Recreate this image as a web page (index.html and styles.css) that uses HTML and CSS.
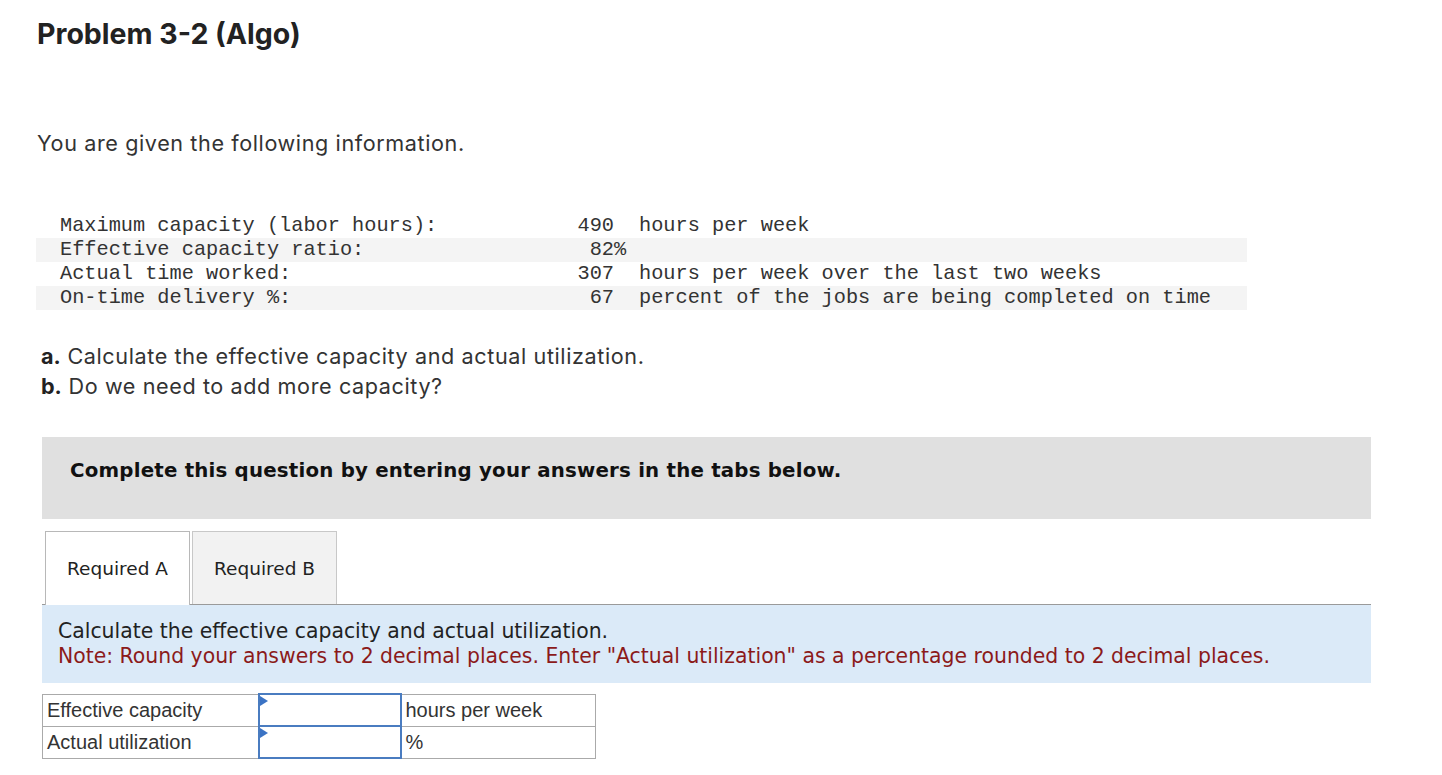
FILE: index.html
```html
<!DOCTYPE html>
<html>
<head>
<meta charset="utf-8">
<link rel="stylesheet" href="styles.css">
</head>
<body>
<div class="page">
  <h1 class="title">Problem 3-2 (Algo)</h1>
  <p class="intro">You are given the following information.</p>
  <table class="info">
    <tr><td class="lbl">Maximum capacity (labor hours):</td><td class="num">490</td><td class="txt">hours per week</td></tr>
    <tr class="alt"><td class="lbl">Effective capacity ratio:</td><td class="num">82<span class="pct">%</span></td><td class="txt"></td></tr>
    <tr><td class="lbl">Actual time worked:</td><td class="num">307</td><td class="txt">hours per week over the last two weeks</td></tr>
    <tr class="alt"><td class="lbl">On-time delivery %:</td><td class="num">67</td><td class="txt">percent of the jobs are being completed on time</td></tr>
  </table>
  <div class="questions">
    <div><b>a.</b> Calculate the effective capacity and actual utilization.</div>
    <div><b>b.</b> Do we need to add more capacity?</div>
  </div>
  <div class="panel">
    <div class="banner">Complete this question by entering your answers in the tabs below.</div>
    <div class="tabs">
      <div class="tab active">Required A</div>
      <div class="tab">Required B</div>
    </div>
    <div class="instr">
      <div>Calculate the effective capacity and actual utilization.</div>
      <div class="note">Note: Round your answers to 2 decimal places. Enter "Actual utilization" as a percentage rounded to 2 decimal places.</div>
    </div>
    <table class="answers">
      <tr><td class="alabel">Effective capacity</td><td class="ainput"><span class="flag"></span></td><td class="aunit">hours per week</td></tr>
      <tr><td class="alabel">Actual utilization</td><td class="ainput"><span class="flag"></span></td><td class="aunit">%</td></tr>
    </table>
  </div>
</div>
</body>
</html>
```
FILE: styles.css
```css
html, body { margin: 0; padding: 0; background: #fff; }
.page { padding: 0 0 0 37px; color: #333; font-family: Inter, "Open Sans", sans-serif; }
.title { margin: 0; padding-top: 18px; font-size: 28.5px; font-weight: 700; color: #222; line-height: 32px; height: 32px; }
.intro { margin: 0; padding-top: 80px; font-size: 21.6px; line-height: 26px; color: #333; letter-spacing: 0.6px; }
.info { margin-top: 58px; margin-left: -1px; border-collapse: collapse; width: 1211px; font-family: "Liberation Mono", monospace; font-size: 20.3px; color: #333; }
.info td { padding: 0; height: 24px; line-height: 24px; white-space: pre; }
.info tr.alt td { background: #f4f4f4; }
.info .lbl { padding-left: 24px; width: 480px; }
.info .num { text-align: right; width: 74px; padding-right: 0; }
.info .pct { display: inline-block; width: 0; overflow: visible; }
.info .txt { padding-left: 25px; }
.questions { margin-top: 31px; margin-left: 4px; font-size: 21.6px; line-height: 30px; color: #333; letter-spacing: 0.6px; }
.questions b { font-weight: 700; color: #222; letter-spacing: 0; }
.panel { margin-top: 36px; margin-left: 5px; width: 1329px; font-family: "DejaVu Sans", Verdana, sans-serif; }
.banner { background: #e0e0e0; height: 82px; padding: 0 0 16px 28px; font-weight: 700; font-size: 19.8px; color: #111; box-sizing: border-box; display: flex; align-items: center; letter-spacing: 0.2px; }
.tabs { display: flex; gap: 2px; margin-top: 12px; padding-left: 3px; border-bottom: 1px solid #9a9a9a; height: 73px; }
.tab { width: 145px; border: 1px solid #c8c8c8; border-bottom: none; background: #f2f2f2; font-size: 18.5px; color: #222; display: flex; align-items: center; justify-content: center; box-sizing: border-box; height: 73px; }
.tab.active { background: #fff; height: 74px; margin-bottom: -1px; border-color: #b8b8b8; }
.instr { background: #dbeaf8; height: 78px; padding: 14px 0 0 16px; box-sizing: border-box; font-size: 20.4px; line-height: 25px; color: #222; }
.instr .note { color: #8b1a1a; }
.answers { margin-top: 10px; border-collapse: collapse; font-family: "Liberation Sans", Arial, sans-serif; font-size: 20px; color: #333; }
.answers td { border: 1px solid #aaa; height: 32px; padding: 0 4px; box-sizing: border-box; }
.answers .alabel { width: 216px; }
.answers .ainput { width: 142px; border: 2px solid #4a7cc0; position: relative; padding: 0; }
.answers .aunit { width: 195px; }
.flag { position: absolute; left: 0; top: 1px; width: 0; height: 0; border-top: 5px solid transparent; border-bottom: 5px solid transparent; border-left: 8px solid #3b73c4; }
```
